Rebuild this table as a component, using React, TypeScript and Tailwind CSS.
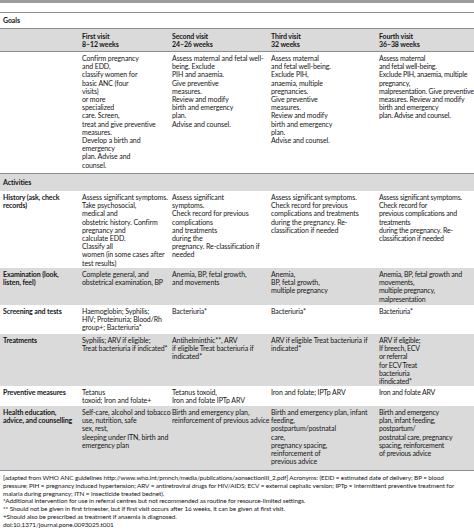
const GRAY = 'bg-[#dadada]';

type Row = {
  label: string[];
  cells: string[][];
  cls: string;
};

const rows: Row[] = [
  {
    label: [],
    cls: 'h-[121px] bg-white',
    cells: [
      ['Confirm pregnancy', 'and EDD,', 'classify women for', 'basic ANC (four', 'visits)', 'or more', 'specialized', 'care. Screen,', 'treat and give preventive', 'measures.', 'Develop a birth and', 'emergency', 'plan. Advise and', 'counsel.'],
      ['Assess maternal and fetal well-', 'being. Exclude', 'PIH and anaemia.', 'Give preventive', 'measures.', 'Review and modify', 'birth and emergency', 'plan.', 'Advise and counsel.'],
      ['Assess maternal', 'and fetal well-being.', 'Exclude PIH,', 'anaemia, multiple', 'pregnancies.', 'Give preventive', 'measures.', 'Review and modify', 'birth and emergency', 'plan.', 'Advise and counsel.'],
      ['Assess maternal', 'and fetal well-being.', 'Exclude PIH, anaemia, multiple', 'pregnancy,', 'malpresentation. Give preventive', 'measures. Review and modify', 'birth and emergency', 'plan. Advise and counsel.'],
    ],
  },
];

const activities: Row[] = [
  {
    label: ['History (ask, check', 'records)'],
    cls: 'h-[77px] bg-white',
    cells: [
      ['Assess significant symptoms.', 'Take psychosocial,', 'medical and', 'obstetric history. Confirm', 'pregnancy and', 'calculate EDD.', 'Classify all', 'women (in some cases after', 'test results)'],
      ['Assess significant', 'symptoms.', 'Check record for previous', 'complications', 'and treatments', 'during the', 'pregnancy. Re-classification if', 'needed'],
      ['Assess significant symptoms.', 'Check record for previous', 'complications and treatments', 'during the pregnancy. Re-', 'classification if needed'],
      ['Assess significant symptoms.', 'Check record for', 'previous complications and', 'treatments', 'during the pregnancy. Re-', 'classification if needed'],
    ],
  },
  {
    label: ['Examination (look,', 'listen, feel)'],
    cls: 'h-[37px] bg-[#dadada]',
    cells: [
      ['Complete general, and', 'obstetrical examination, BP'],
      ['Anemia, BP, fetal growth,', 'and movements'],
      ['Anemia,', 'BP, fetal growth,', 'multiple pregnancy'],
      ['Anemia, BP, fetal growth and', 'movements,', 'multiple pregnancy,', 'malpresentation'],
    ],
  },
  {
    label: ['Screening and tests'],
    cls: 'h-[29px] bg-white',
    cells: [
      ['Haemoglobin; Syphilis;', 'HIV; Proteinuria; Blood/Rh', 'group+; Bacteriuria*'],
      ['Bacteriuria*'],
      ['Bacteriuria*'],
      ['Bacteriuria*'],
    ],
  },
  {
    label: ['Treatments'],
    cls: 'h-[52px] bg-[#dadada]',
    cells: [
      ['Syphilis; ARV if eligible;', 'Treat bacteriuria if indicated*'],
      ['Antihelminthic**, ARV', 'if eligible Treat bacteriuria if', 'indicated*'],
      ['ARV if eligible Treat bacteriuria if', 'indicated*'],
      ['ARV if eligible;', 'If breech, ECV', 'or referral', 'for ECV Treat', 'bacteriuria', 'ifindicated*'],
    ],
  },
  {
    label: ['Preventive measures'],
    cls: 'h-[20px] bg-white',
    cells: [
      ['Tetanus', 'toxoid; Iron and folate+'],
      ['Tetanus toxoid,', 'Iron and folate IPTp ARV'],
      ['Iron and folate; IPTp ARV'],
      ['Iron and folate ARV'],
    ],
  },
  {
    label: ['Health education,', 'advice, and counselling'],
    cls: 'h-[64px] bg-[#dadada]',
    cells: [
      ['Self-care, alcohol and tobacco', 'use, nutrition, safe', 'sex, rest,', 'sleeping under ITN, birth and', 'emergency plan'],
      ['Birth and emergency plan,', 'reinforcement of previous advice'],
      ['Birth and emergency plan, infant', 'feeding,', 'postpartum/postnatal', 'care,', 'pregnancy spacing,', 'reinforcement of', 'previous advice'],
      ['Birth and emergency', 'plan, infant feeding,', 'postpartum/', 'postnatal care, pregnancy', 'spacing, reinforcement', 'of previous advice'],
    ],
  },
];

const notes = [
  '[adapted from WHO ANC guidelines http://www.who.int/pmnch/media/publications/aonsectionIII_2.pdf] Acronyms: (EDD = estimated date of delivery; BP = blood',
  'pressure; PIH = pregnancy induced hypertension; ARV = antiretroviral drugs for HIV/AIDS; ECV = external cephalic version; IPTp = intermittent preventive treatment for',
  'malaria during pregnancy; ITN = insecticide treated bednet).',
  '*Additional intervention for use in referral centres but not recommended as routine for resource-limited settings.',
  '** Should not be given in first trimester, but if first visit occurs after 16 weeks, it can be given at first visit.',
  '+Should also be prescribed as treatment if anaemia is diagnosed.',
  'doi:10.1371/journal.pone.0093025.t001',
];

const cols = 'grid grid-cols-[79px_90px_99px_108px_1fr] pl-[3px]';

const Lines = ({ items, bold, tight }: { items: string[]; bold?: boolean; tight?: boolean }) => (
  <div className={`${bold ? 'font-bold' : ''} ${tight ? 'tracking-[-0.2px]' : ''}`}>
    {items.map((t, i) => (
      <div key={i} className="whitespace-nowrap">{t}</div>
    ))}
  </div>
);

const TableRow = ({ row }: { row: Row }) => (
  <div className={`${cols} pt-[2px] ${row.cls}`}>
    <Lines items={row.label} bold />
    {row.cells.map((c, i) => (
      <Lines key={i} items={c} tight={i === 3} />
    ))}
  </div>
);

export default function App() {
  return (
    <div
      className="w-[474px] h-[530px] overflow-hidden bg-white text-[#161616] text-[7px] leading-[8.2px] tracking-[-0.1px]"
      style={{ fontFamily: 'Lato, "Open Sans", sans-serif' }}
    >
      <div className="h-[3px] bg-[#9c9c9c]" />
      <div className="h-[9px]" />
      <div className="border-t border-[#8c8c8c] h-[16px] flex items-center pl-[3px] font-bold">Goals</div>
      <div className={`${cols} ${GRAY} border-t border-b border-[#8c8c8c] h-[24px] items-center font-bold`}>
        <div />
        <div>First visit<br />8–12 weeks</div>
        <div>Second visit<br />24–26 weeks</div>
        <div>Third visit<br />32 weeks</div>
        <div>Fourth visit<br />36–38 weeks</div>
      </div>
      {rows.map((r, i) => (
        <TableRow key={i} row={r} />
      ))}
      <div className={`${GRAY} border-t border-[#8c8c8c] h-[18px] flex items-center pl-[3px] font-bold`}>
        Activities
      </div>
      {activities.map((r, i) => (
        <TableRow key={i} row={r} />
      ))}
      <div className="border-t border-[#8c8c8c] pt-[3px] pl-[3px] text-[6.4px] leading-[7.8px] tracking-[-0.1px]">
        {notes.map((n, i) => (
          <div key={i} className="whitespace-nowrap">{n}</div>
        ))}
      </div>
    </div>
  );
}
